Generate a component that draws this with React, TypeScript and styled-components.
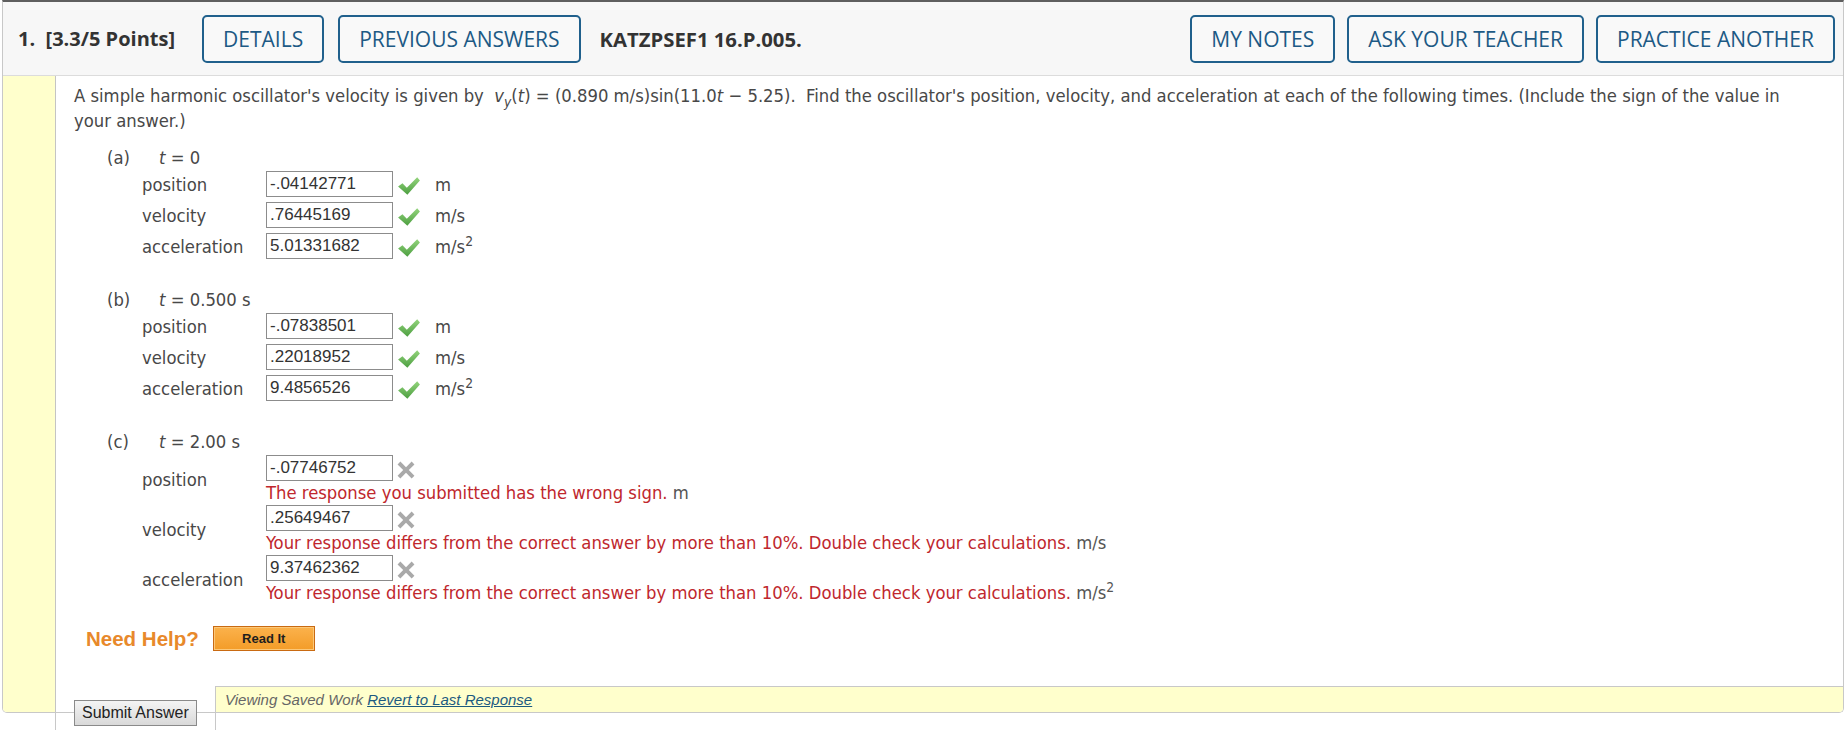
import React from 'react';
import styled, { createGlobalStyle } from 'styled-components';

const GlobalStyle = createGlobalStyle`
	html, body {
		margin: 0;
		padding: 0;
		background: #ffffff;
	}
	body {
		font-family: 'DejaVu Sans Condensed', 'DejaVu Sans', sans-serif;
		font-stretch: semi-condensed;
	}
`;

const Page = styled.div`
	width: 1848px;
	height: 730px;
	overflow: hidden;
	padding-left: 2px;
	box-sizing: border-box;
`;

const Card = styled.div`
	width: 1842px;
	box-sizing: border-box;
	border: 1px solid #c8c8c8;
	border-top: 2px solid #5f5f5f;
	border-radius: 0 0 5px 5px;
`;

const Header = styled.div`
	display: flex;
	align-items: center;
	height: 73px;
	padding: 0 8px 0 15px;
	background: #f7f7f7;
	border-bottom: 1px solid #dcdcdc;
	font-family: 'Open Sans', 'Noto Sans', sans-serif;
	font-stretch: normal;
`;

const Title = styled.span`
	font-size: 20px;
	font-weight: 700;
	color: #333333;
	margin-right: 27px;
	white-space: pre;
`;

const Code = styled.span`
	font-size: 20.3px;
	font-weight: 700;
	color: #333333;
	margin-left: 5px;
`;

const Spacer = styled.div`
	flex: 1;
`;

const HeaderButton = styled.button<{ $gap?: number }>`
	height: 48px;
	padding: 0 19px;
	margin-right: ${(p) => p.$gap ?? 14}px;
	border: 2px solid #20608c;
	border-radius: 5px;
	background: #f9f9f9;
	color: #1d5a85;
	font-family: 'Open Sans', 'Noto Sans', sans-serif;
	font-size: 21px;
	cursor: pointer;
	&:last-child {
		margin-right: 0;
	}
`;

const Body = styled.div`
	display: flex;
`;

const Gutter = styled.div`
	width: 52px;
	flex-shrink: 0;
	background: #ffffcc;
	border-right: 1px solid #c4c4c4;
	border-bottom-left-radius: 4px;
`;

const Content = styled.div`
	flex: 1;
	padding-top: 7px;
	color: #484848;
	font-size: 18.3px;
`;

const Question = styled.p`
	margin: 0;
	padding: 0 40px 0 18px;
	line-height: 25px;
`;

const Var = styled.i`
	font-style: italic;
`;

const Sub = styled.sub`
	font-size: 0.75em;
	line-height: 0;
	font-style: italic;
`;

const Sup = styled.sup`
	font-size: 0.75em;
	line-height: 0;
`;

const Part = styled.div<{ $first?: boolean }>`
	margin-top: ${(p) => (p.$first ? 12 : 28)}px;
	padding-left: 86px;
`;

const PartHead = styled.div`
	line-height: 25px;
	margin-left: -35px;
	margin-bottom: 1px;
`;

const PartTag = styled.span`
	display: inline-block;
	width: 52px;
`;

const Row = styled.div`
	display: flex;
	align-items: center;
	height: 26px;
	margin-bottom: 5px;
`;

const Label = styled.span`
	width: 124px;
	flex-shrink: 0;
`;

const Answer = styled.input`
	width: 127px;
	height: 26px;
	box-sizing: border-box;
	margin: 0;
	padding: 0 3px;
	border: 1px solid #8c8c8c;
	background: #ffffff;
	color: #333333;
	font-family: 'Liberation Sans', Arial, sans-serif;
	font-size: 17px;
	font-stretch: normal;
	outline: none;
`;

const Mark = styled.span`
	display: inline-flex;
	align-items: center;
	margin-left: 4px;
	margin-top: 4px;
	width: 26px;
`;

const Unit = styled.span`
	margin-left: 12px;
`;

const ErrRow = styled.div`
	display: flex;
	align-items: center;
	margin-bottom: 1px;
`;

const Field = styled.div`
	display: flex;
	flex-direction: column;
`;

const FieldTop = styled.div`
	display: flex;
	align-items: center;
	height: 26px;
`;

const ErrText = styled.div`
	line-height: 23px;
	color: #c0272d;
`;

const ErrUnit = styled.span`
	color: #555555;
`;

const Help = styled.div`
	display: flex;
	align-items: center;
	margin: 22px 0 0 30px;
`;

const HelpText = styled.span`
	font-family: 'Liberation Sans', Arial, sans-serif;
	font-stretch: normal;
	font-weight: 700;
	font-size: 20.5px;
	color: #e8892b;
	margin-right: 14px;
`;

const ReadIt = styled.button`
	width: 102px;
	height: 25px;
	border: 1px solid #c96a12;
	box-shadow: inset 0 0 0 1px #fcc878;
	background: linear-gradient(#fbb24c, #f39c28);
	font-family: 'Liberation Sans', Arial, sans-serif;
	font-weight: 700;
	font-size: 13px;
	color: #1e1e1e;
	cursor: pointer;
`;

const Footer = styled.div`
	display: flex;
	align-items: flex-start;
	margin-top: 35px;
`;

const SubmitCell = styled.div`
	width: 159px;
	flex-shrink: 0;
	height: 26px;
	padding-left: 18px;
	box-sizing: border-box;
`;

const Submit = styled.button`
	margin-top: 14px;
	height: 26px;
	padding: 0 7px;
	border: 1px solid #8a8a8a;
	background: linear-gradient(#f4f4f4, #d9d9d9);
	font-family: 'Liberation Sans', Arial, sans-serif;
	font-size: 16px;
	color: #222222;
	position: relative;
	z-index: 1;
	cursor: pointer;
`;

const SavedBar = styled.div`
	flex: 1;
	height: 25px;
	display: flex;
	align-items: center;
	padding-left: 9px;
	background: #ffffcc;
	border-top: 1px solid #c8c8c8;
	border-left: 1px solid #c8c8c8;
	border-bottom-right-radius: 4px;
	font-family: 'Liberation Sans', Arial, sans-serif;
	font-stretch: normal;
	font-style: italic;
	font-size: 15px;
	color: #666666;
`;

const Revert = styled.a`
	margin-left: 4px;
	color: #1c5a80;
	text-decoration: underline;
	cursor: pointer;
`;

const Overhang = styled.div`
	margin-left: 53px;
	width: 159px;
	height: 20px;
	border-left: 1px solid #c8c8c8;
	border-right: 1px solid #c8c8c8;
`;

const CheckIcon = () => (
	<svg width="24" height="20" viewBox="0 0 22 18">
		<defs>
			<linearGradient id="chk" x1="0" y1="0" x2="0" y2="1">
				<stop offset="0" stopColor="#93d47c" />
				<stop offset="1" stopColor="#4d9f41" />
			</linearGradient>
		</defs>
		<path d="M1 9.5 L5 6.5 L9 10.5 L18.5 1 L21 4 L9.5 17 Z" fill="url(#chk)" />
	</svg>
);

const CrossIcon = () => (
	<svg width="18" height="18" viewBox="0 0 16 16">
		<path
			d="M3 0.5 L8 5.5 L13 0.5 L15.5 3 L10.5 8 L15.5 13 L13 15.5 L8 10.5 L3 15.5 L0.5 13 L5.5 8 L0.5 3 Z"
			fill="#a9a9a9"
		/>
	</svg>
);

type Item = { label: string; value: string; unit: React.ReactNode };

const m2 = (
	<>
		m/s<Sup>2</Sup>
	</>
);

const parts: { tag: string; time: React.ReactNode; items: Item[] }[] = [
	{
		tag: '(a)',
		time: '= 0',
		items: [
			{ label: 'position', value: '-.04142771', unit: 'm' },
			{ label: 'velocity', value: '.76445169', unit: 'm/s' },
			{ label: 'acceleration', value: '5.01331682', unit: m2 },
		],
	},
	{
		tag: '(b)',
		time: '= 0.500 s',
		items: [
			{ label: 'position', value: '-.07838501', unit: 'm' },
			{ label: 'velocity', value: '.22018952', unit: 'm/s' },
			{ label: 'acceleration', value: '9.4856526', unit: m2 },
		],
	},
];

const wrong: (Item & { msg: string })[] = [
	{
		label: 'position',
		value: '-.07746752',
		unit: 'm',
		msg: 'The response you submitted has the wrong sign.',
	},
	{
		label: 'velocity',
		value: '.25649467',
		unit: 'm/s',
		msg: 'Your response differs from the correct answer by more than 10%. Double check your calculations.',
	},
	{
		label: 'acceleration',
		value: '9.37462362',
		unit: m2,
		msg: 'Your response differs from the correct answer by more than 10%. Double check your calculations.',
	},
];

export default function App() {
	return (
		<Page>
			<GlobalStyle />
			<Card>
				<Header>
					<Title>1.  [3.3/5 Points]</Title>
					<HeaderButton>DETAILS</HeaderButton>
					<HeaderButton>PREVIOUS ANSWERS</HeaderButton>
					<Code>KATZPSEF1 16.P.005.</Code>
					<Spacer />
					<HeaderButton $gap={12}>MY NOTES</HeaderButton>
					<HeaderButton $gap={12}>ASK YOUR TEACHER</HeaderButton>
					<HeaderButton>PRACTICE ANOTHER</HeaderButton>
				</Header>
				<Body>
					<Gutter />
					<Content>
						<Question>
							A simple harmonic oscillator's velocity is given by&nbsp;{' '}
							<Var>v</Var>
							<Sub>y</Sub>(<Var>t</Var>) = (0.890 m/s)sin(11.0<Var>t</Var> − 5.25).&nbsp; Find the
							oscillator's position, velocity, and acceleration at each of the following times. (Include
							the sign of the value in your answer.)
						</Question>
						{parts.map((part, i) => (
							<Part key={part.tag} $first={i === 0}>
								<PartHead>
									<PartTag>{part.tag}</PartTag>
									<Var>t</Var> {part.time}
								</PartHead>
								{part.items.map((item) => (
									<Row key={item.label}>
										<Label>{item.label}</Label>
										<Answer readOnly value={item.value} />
										<Mark>
											<CheckIcon />
										</Mark>
										<Unit>{item.unit}</Unit>
									</Row>
								))}
							</Part>
						))}
						<Part>
							<PartHead>
								<PartTag>(c)</PartTag>
								<Var>t</Var> = 2.00 s
							</PartHead>
							{wrong.map((item) => (
								<ErrRow key={item.label}>
									<Label>{item.label}</Label>
									<Field>
										<FieldTop>
											<Answer readOnly value={item.value} />
											<Mark>
												<CrossIcon />
											</Mark>
										</FieldTop>
										<ErrText>
											{item.msg} <ErrUnit>{item.unit}</ErrUnit>
										</ErrText>
									</Field>
								</ErrRow>
							))}
						</Part>
						<Help>
							<HelpText>Need Help?</HelpText>
							<ReadIt>Read It</ReadIt>
						</Help>
						<Footer>
							<SubmitCell>
								<Submit>Submit Answer</Submit>
							</SubmitCell>
							<SavedBar>
								Viewing Saved Work
								<Revert>Revert to Last Response</Revert>
							</SavedBar>
						</Footer>
					</Content>
				</Body>
			</Card>
			<Overhang />
		</Page>
	);
}
